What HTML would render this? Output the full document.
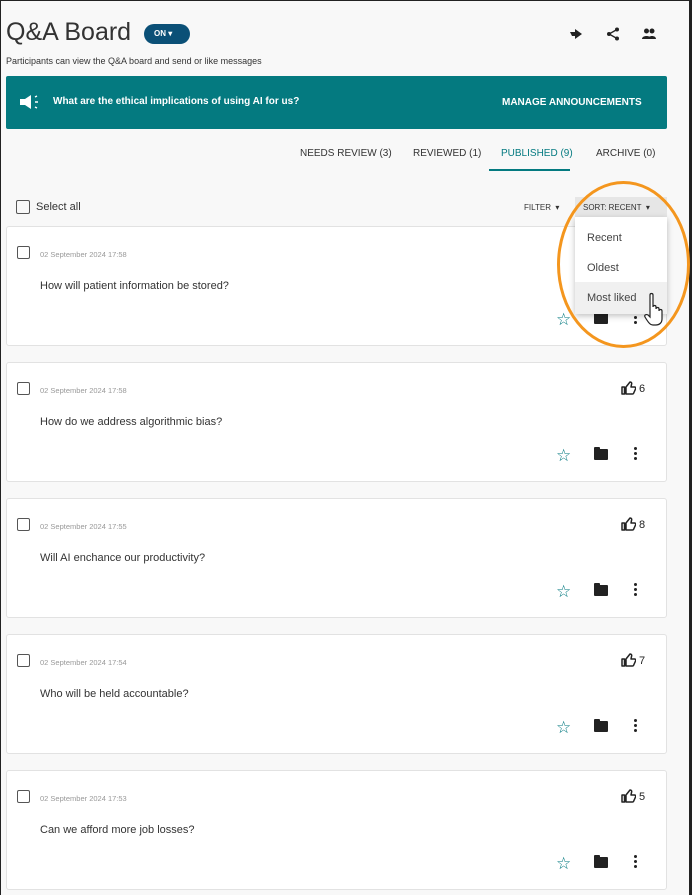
<!DOCTYPE html>
<html><head><meta charset="utf-8"><style>
*{box-sizing:border-box;margin:0;padding:0}
body{width:692px;height:895px;overflow:hidden;background:#fff;font-family:"Liberation Sans",sans-serif;position:relative}
.frame{position:absolute;left:0;top:0;width:692px;height:895px;background:#f8f8f8;box-shadow:inset 1px 1px 0 #222,inset -3px 0 0 #222}
.abs{position:absolute}
h1{position:absolute;left:6px;top:18px;font-weight:400;font-size:25px;color:#333}
.on{position:absolute;left:144px;top:24px;width:46px;height:20px;border-radius:10px;background:#0b5077;color:#fff;font-size:8px;font-weight:bold;padding:5px 0 0 10px}
.sub{left:6px;top:56px;font-size:9px;color:#333}
.banner{left:6px;top:76px;width:661px;height:53px;background:#047a80;border-radius:2px;color:#fff;font-weight:bold;font-size:10px}
.tabs{top:148px;font-size:10px;color:#333}
.card{position:absolute;left:6px;width:661px;height:120px;background:#fff;border:1px solid #e2e2e2;border-radius:3px}
.cb{position:absolute;width:13px;height:13px;border:1.5px solid #555;border-radius:2px}
.date{position:absolute;left:33px;top:23px;font-size:7.5px;color:#999}
.q{position:absolute;left:33px;top:53px;font-size:11px;color:#333}
.like{position:absolute;left:614px;top:18px;font-size:11px;color:#222}
.like svg{vertical-align:-3px;margin-right:3px}
.star{position:absolute;left:549px;top:83px;color:#047a80;font-size:17px}
.fold{position:absolute;left:587px;top:86px;width:14px;height:11px;background:#222;border-radius:1px}
.fold:after{content:"";position:absolute;left:0;top:-2px;width:6px;height:3px;background:#222;border-radius:1px 1px 0 0}
.dots{position:absolute;left:627px;top:84px;width:3px;}
.dots i{display:block;width:3px;height:3px;background:#222;border-radius:50%;margin-bottom:2px}
</style></head><body><div class="frame">
<h1>Q&amp;A Board</h1>
<div class="on">ON &#9662;</div>
<svg class="abs" style="left:569px;top:28px" width="14" height="12"><path d="M1 4h5V1l7 5-7 5V8H3z" fill="#222"/></svg>
<svg class="abs" style="left:606px;top:27px" width="14" height="14"><circle cx="11" cy="2.5" r="2" fill="#222"/><circle cx="3" cy="7" r="2" fill="#222"/><circle cx="11" cy="11.5" r="2" fill="#222"/><path d="M11 2.5L3 7l8 4.5" stroke="#222" fill="none" stroke-width="1.3"/></svg>
<svg class="abs" style="left:642px;top:28px" width="14" height="11"><circle cx="4.5" cy="3" r="2.5" fill="#222"/><circle cx="10" cy="3" r="2.5" fill="#222"/><path d="M0 11c0-4 9-4 9 0zM6 11c0-4 8-4 8 0z" fill="#222"/></svg>
<div class="abs sub">Participants can view the Q&amp;A board and send or like messages</div>
<div class="abs banner">
<svg class="abs" style="left:12px;top:18px" width="22" height="16"><path d="M2 5h5l6-4v14l-6-4H2z" fill="#fff"/><path d="M17 3l2-1M17 8h3M17 13l2 1" stroke="#fff" stroke-width="1.5"/></svg>
<div class="abs" style="left:47px;top:20px">What are the ethical implications of using AI for us?</div>
<div class="abs" style="left:496px;top:21px">MANAGE ANNOUNCEMENTS</div>
</div>
<div class="abs tabs" style="left:300px">NEEDS REVIEW (3)</div>
<div class="abs tabs" style="left:413px">REVIEWED (1)</div>
<div class="abs tabs" style="left:501px;color:#047a80">PUBLISHED (9)</div>
<div class="abs" style="left:489px;top:169px;width:81px;height:2px;background:#047a80"></div>
<div class="abs tabs" style="left:596px">ARCHIVE (0)</div>
<div class="cb" style="left:16px;top:200px;width:14px;height:14px"></div>
<div class="abs" style="left:36px;top:201px;font-size:11px;color:#333">Select all</div>
<div class="abs" style="left:524px;top:203px;font-size:8px;color:#333">FILTER &nbsp;&#9662;</div>
<div class="abs" style="left:575px;top:197px;width:92px;height:20px;background:#e6e6e6"></div>
<div class="abs" style="left:583px;top:203px;font-size:8px;color:#333">SORT: RECENT &nbsp;&#9662;</div>

<div class="card" style="top:226px"><div class="cb" style="left:10px;top:19px"></div><div class="date">02 September 2024 17:58</div><div class="q">How will patient information be stored?</div><div class="star">☆</div><div class="fold"></div><div class="dots"><i></i><i></i><i></i></div></div>
<div class="card" style="top:362px"><div class="cb" style="left:10px;top:19px"></div><div class="date">02 September 2024 17:58</div><div class="q">How do we address algorithmic bias?</div><div class="like"><svg width="15" height="14"><path d="M1 6h2.5v7H1zM5 6l4-5c1.5 0 2 1 1.5 2.5L10 6h3.5c1 0 1.5 1 1 2l-2 4.5c-.3.5-.7.5-1 .5H5z" fill="none" stroke="#222" stroke-width="1.5" stroke-linejoin="round"/></svg>6</div><div class="star">☆</div><div class="fold"></div><div class="dots"><i></i><i></i><i></i></div></div>
<div class="card" style="top:498px"><div class="cb" style="left:10px;top:19px"></div><div class="date">02 September 2024 17:55</div><div class="q">Will AI enchance our productivity?</div><div class="like"><svg width="15" height="14"><path d="M1 6h2.5v7H1zM5 6l4-5c1.5 0 2 1 1.5 2.5L10 6h3.5c1 0 1.5 1 1 2l-2 4.5c-.3.5-.7.5-1 .5H5z" fill="none" stroke="#222" stroke-width="1.5" stroke-linejoin="round"/></svg>8</div><div class="star">☆</div><div class="fold"></div><div class="dots"><i></i><i></i><i></i></div></div>
<div class="card" style="top:634px"><div class="cb" style="left:10px;top:19px"></div><div class="date">02 September 2024 17:54</div><div class="q">Who will be held accountable?</div><div class="like"><svg width="15" height="14"><path d="M1 6h2.5v7H1zM5 6l4-5c1.5 0 2 1 1.5 2.5L10 6h3.5c1 0 1.5 1 1 2l-2 4.5c-.3.5-.7.5-1 .5H5z" fill="none" stroke="#222" stroke-width="1.5" stroke-linejoin="round"/></svg>7</div><div class="star">☆</div><div class="fold"></div><div class="dots"><i></i><i></i><i></i></div></div>
<div class="card" style="top:770px"><div class="cb" style="left:10px;top:19px"></div><div class="date">02 September 2024 17:53</div><div class="q">Can we afford more job losses?</div><div class="like"><svg width="15" height="14"><path d="M1 6h2.5v7H1zM5 6l4-5c1.5 0 2 1 1.5 2.5L10 6h3.5c1 0 1.5 1 1 2l-2 4.5c-.3.5-.7.5-1 .5H5z" fill="none" stroke="#222" stroke-width="1.5" stroke-linejoin="round"/></svg>5</div><div class="star">☆</div><div class="fold"></div><div class="dots"><i></i><i></i><i></i></div></div>

<div class="abs" style="left:575px;top:217px;width:92px;height:97px;background:#fff;box-shadow:0 2px 6px rgba(0,0,0,.25);font-size:11px;color:#444">
<div class="abs" style="left:12px;top:15px">Recent</div>
<div class="abs" style="left:12px;top:45px">Oldest</div>
<div class="abs" style="left:0;top:65px;width:92px;height:32px;background:#f0f0f0"></div>
<div class="abs" style="left:12px;top:75px">Most liked</div>
</div>
<svg class="abs" style="left:643px;top:292px" width="28" height="36"><path d="M7 3c0-2 3-2 3 0v12c0-2 3-2 3 0v2c0-2 3-2 3 0v2c0-2 3-2 3 0v8c0 4-3 6-6 6h-3c-3 0-5-3-8-8-1-2 1-3 3-2l2 2z" fill="#fff" stroke="#222" stroke-width="1.2"/></svg>
<div class="abs" style="left:557px;top:181px;width:133px;height:167px;border:3px solid #f4961e;border-radius:50%"></div>
</div></body></html>
